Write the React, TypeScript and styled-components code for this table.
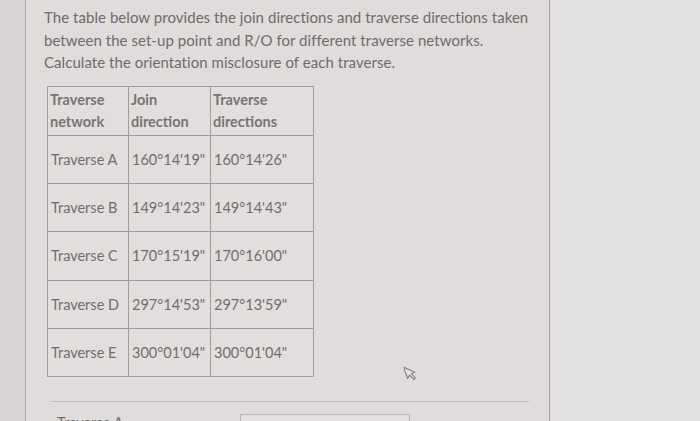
import React from "react";
import styled, { createGlobalStyle } from "styled-components";

const Global = createGlobalStyle`
  html, body { margin: 0; padding: 0; background: #dcd8d8; overflow: hidden; }
  body { font-family: Lato, "Open Sans", sans-serif; }
`;

const Page = styled.div`
  position: relative;
  display: flex;
  width: 700px;
  height: 421px;
  overflow: hidden;
  background: #dedad9;
`;

const LeftStrip = styled.div`
  width: 25px;
  flex: none;
  background: #d8d4d4;
  border-right: 1px solid #aaa6a6;
`;

const Panel = styled.div`
  width: 524px;
  flex: none;
  background: #e0dcdc;
  border-right: 1px solid #a4a0a0;
  padding: 6px 0 0 18px;
  box-sizing: border-box;
`;

const RightArea = styled.div`
  flex: 1;
  background: #e3e1df;
`;

const Intro = styled.p`
  margin: 0;
  font-size: 15px;
  line-height: 22.5px;
  color: #6f6b6b;
  letter-spacing: 0.05px;
`;

const Table = styled.table`
  margin: 12px 0 0 3px;
  border-collapse: collapse;
  font-size: 14.5px;
  color: #716d6d;
  background: #e2dede;
`;

const Head = styled.th<{ w: number }>`
  border: 1px solid #a09c9c;
  text-align: left;
  font-weight: 700;
  color: #787474;
  padding: 2px 2px 2px 2px;
  line-height: 22px;
  vertical-align: top;
  width: ${(p) => p.w}px;
  box-sizing: border-box;
`;

const Cell = styled.td`
  border: 1px solid #a09c9c;
  height: 48.4px;
  padding: 0 2px 0 3px;
  box-sizing: border-box;
  white-space: nowrap;
  vertical-align: middle;
`;

const Separator = styled.div`
  margin: 24px 0 0 7px;
  width: 478px;
  height: 1px;
  background: #c2bebe;
`;

const AnswerRow = styled.div`
  display: flex;
  align-items: flex-start;
  margin-top: 12px;
`;

const AnswerLabel = styled.span`
  margin-left: 13px;
  width: 183px;
  font-size: 14.5px;
  color: #6f6b6b;
  line-height: 18px;
`;

const AnswerBox = styled.div`
  width: 168px;
  height: 20px;
  border: 1px solid #b8b4b4;
  background: #e4e0e0;
`;

const Cursor = styled.svg`
  position: absolute;
  left: 404px;
  top: 364px;
`;

const rows = [
  ["Traverse A", "160°14'19\"", "160°14'26\""],
  ["Traverse B", "149°14'23\"", "149°14'43\""],
  ["Traverse C", "170°15'19\"", "170°16'00\""],
  ["Traverse D", "297°14'53\"", "297°13'59\""],
  ["Traverse E", "300°01'04\"", "300°01'04\""],
];

export default function App() {
  return (
    <>
      <Global />
      <Page>
        <LeftStrip />
        <Panel>
          <Intro>
            The table below provides the join directions and traverse directions taken
            <br />
            between the set-up point and R/O for different traverse networks.
            <br />
            Calculate the orientation misclosure of each traverse.
          </Intro>
          <Table>
            <thead>
              <tr>
                <Head w={81}>Traverse<br />network</Head>
                <Head w={82}>Join<br />direction</Head>
                <Head w={103}>Traverse<br />directions</Head>
              </tr>
            </thead>
            <tbody>
              {rows.map((r) => (
                <tr key={r[0]}>
                  {r.map((c, i) => (
                    <Cell key={i}>{c}</Cell>
                  ))}
                </tr>
              ))}
            </tbody>
          </Table>
          <Separator />
          <AnswerRow>
            <AnswerLabel>Traverse A</AnswerLabel>
            <AnswerBox />
          </AnswerRow>
        </Panel>
        <RightArea />
        <Cursor width="14" height="18" viewBox="0 0 14 18">
          <path
            d="M2 1 L2 13 L5 10.5 L7.5 16 L9.5 15 L7 9.8 L11 9.5 Z"
            fill="#e6e2e2"
            stroke="#7a7676"
            strokeWidth="1"
            strokeLinejoin="round"
            transform="rotate(-20 7 9)"
          />
        </Cursor>
      </Page>
    </>
  );
}
